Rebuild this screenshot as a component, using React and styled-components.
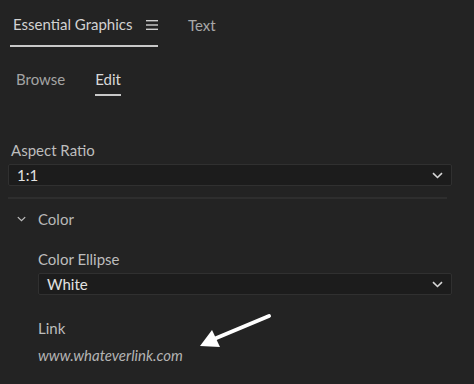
import React from "react";
import styled, { createGlobalStyle } from "styled-components";

const GlobalStyle = createGlobalStyle`
  html, body {
    margin: 0;
    padding: 0;
    background: #232323;
  }
  body {
    font-family: Lato, "Noto Sans", sans-serif;
    color: #c4c4c4;
  }
`;

const Panel = styled.div`
  position: relative;
  width: 474px;
  height: 384px;
  overflow: hidden;
  background: #232323;
`;

const Header = styled.div`
  display: flex;
  align-items: flex-end;
  padding-left: 10px;
  height: 47px;
`;

const MainTab = styled.div`
  display: flex;
  align-items: center;
  justify-content: space-between;
  box-sizing: border-box;
  width: 148px;
  height: 47px;
  padding: 2px 0 0 3px;
  border-bottom: 2px solid #c8c8c8;
  font-size: 15px;
  color: #d2d2d2;
`;

const MenuIcon = styled.svg`
  width: 12px;
  height: 10px;
  margin-top: 2px;
`;

const Tab = styled.div`
  margin-left: 30px;
  height: 47px;
  display: flex;
  align-items: center;
  padding-top: 2px;
  box-sizing: border-box;
  font-size: 15px;
  color: #a8a8a8;
`;

const SubTabs = styled.div`
  display: flex;
  gap: 30px;
  padding: 22px 0 0 16px;
`;

const SubTab = styled.div`
  font-size: 15px;
  line-height: 20px;
  padding-bottom: 5px;
  color: ${(p) => (p.$active ? "#d8d8d8" : "#a4a4a4")};
  border-bottom: 2px solid ${(p) => (p.$active ? "#c8c8c8" : "transparent")};
`;

const Section = styled.div`
  padding: 44px 22px 0 8px;
`;

const Label = styled.div`
  font-size: 15px;
  line-height: 20px;
  color: #bdbdbd;
  padding-left: ${(p) => (p.$inset ? "0" : "3px")};
  margin-bottom: 4px;
`;

const Select = styled.div`
  display: flex;
  align-items: center;
  justify-content: space-between;
  box-sizing: border-box;
  height: 22px;
  padding: 0 8px 0 8px;
  border: 1px solid #303030;
  border-radius: 2px;
  background: #1c1c1c;
  font-size: 15px;
  color: #e2e2e2;
`;

const Chevron = styled.svg`
  width: 11px;
  height: 7px;
`;

const Divider = styled.div`
  height: 2px;
  margin: 11px 5px 0 0;
  background: #2e2e2e;
`;

const GroupHead = styled.div`
  display: flex;
  align-items: center;
  gap: 12px;
  padding: 10px 0 0 9px;
  font-size: 15px;
  line-height: 20px;
  color: #b8b8b8;
`;

const GroupBody = styled.div`
  padding: 20px 0 0 30px;
`;

const Field = styled.div`
  margin-bottom: 23px;
`;

const LinkText = styled.div`
  font-size: 15px;
  font-style: italic;
  color: #b4b4b4;
  margin-top: 8px;
`;

const Arrow = styled.svg`
  position: absolute;
  left: 196px;
  top: 312px;
  width: 78px;
  height: 40px;
`;

const DownChevron = () => (
  <Chevron viewBox="0 0 11 7">
    <path d="M1 1.2 L5.5 5.5 L10 1.2" fill="none" stroke="#d6d6d6" strokeWidth="1.6" />
  </Chevron>
);

export default function App() {
  return (
    <Panel>
      <GlobalStyle />
      <Header>
        <MainTab>
          <span>Essential Graphics</span>
          <MenuIcon viewBox="0 0 12 10">
            <rect x="0" y="0" width="12" height="1.4" fill="#cfcfcf" />
            <rect x="0" y="4.3" width="12" height="1.4" fill="#cfcfcf" />
            <rect x="0" y="8.6" width="12" height="1.4" fill="#cfcfcf" />
          </MenuIcon>
        </MainTab>
        <Tab>Text</Tab>
      </Header>

      <SubTabs>
        <SubTab>Browse</SubTab>
        <SubTab $active>Edit</SubTab>
      </SubTabs>

      <Section>
        <Label>Aspect Ratio</Label>
        <Select>
          <span>1:1</span>
          <DownChevron />
        </Select>
        <Divider />

        <GroupHead>
          <Chevron viewBox="0 0 11 7" style={{ width: 9, height: 6 }}>
            <path d="M1 1.2 L5.5 5.5 L10 1.2" fill="none" stroke="#bdbdbd" strokeWidth="1.6" />
          </Chevron>
          <span>Color</span>
        </GroupHead>

        <GroupBody>
          <Field>
            <Label $inset>Color Ellipse</Label>
            <Select>
              <span>White</span>
              <DownChevron />
            </Select>
          </Field>
          <Label $inset>Link</Label>
          <LinkText>www.whateverlink.com</LinkText>
        </GroupBody>
      </Section>

      <Arrow viewBox="0 0 78 40">
        <line x1="73" y1="4" x2="18" y2="27" stroke="#ffffff" strokeWidth="4" strokeLinecap="round" />
        <polygon points="4,34 16,18 24,35" fill="#ffffff" />
      </Arrow>
    </Panel>
  );
}
